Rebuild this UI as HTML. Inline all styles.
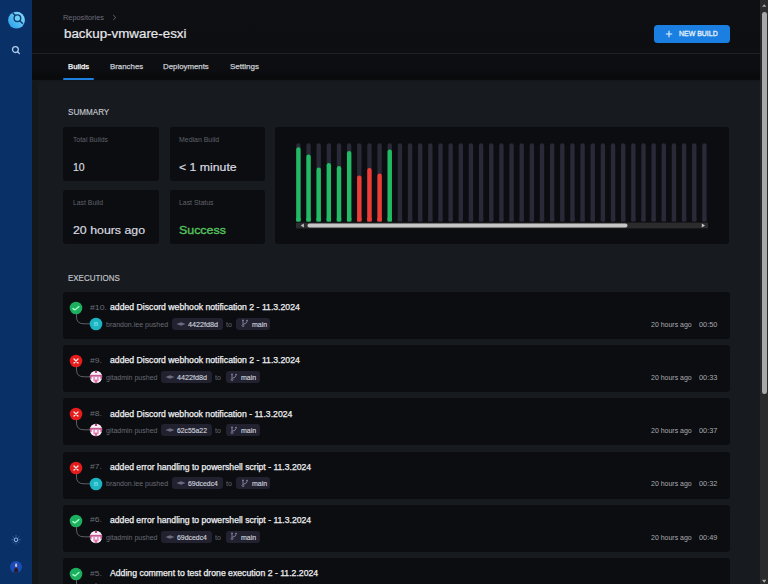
<!DOCTYPE html>
<html><head><meta charset="utf-8">
<style>
*{margin:0;padding:0;box-sizing:border-box}
html,body{width:768px;height:584px;overflow:hidden;background:#181c20;font-family:"Liberation Sans",sans-serif}
.a{position:absolute}
.t{position:absolute;white-space:nowrap;line-height:1;transform-origin:0 0}
.card{position:absolute;background:#0c0d10;border-radius:3px}
.chip{position:absolute;background:#21212f;border-radius:3px}
</style></head><body>

<div class="a" style="left:0;top:0;width:32px;height:584px;background:#0a3068"></div>
<div class="a" style="left:32px;top:0;width:729px;height:80px;background:linear-gradient(#0e0f12 0,#0d0e11 70px,#0a0b0d 76px,#0a0b0d 80px)"></div>
<div class="a" style="left:32px;top:53px;width:729px;height:1px;background:#1e2025"></div>
<div class="a" style="left:32px;top:80px;width:729px;height:504px;background:linear-gradient(#14171a 0,#171b1f 3px)"></div>
<div class="a" style="left:32px;top:80px;width:6px;height:504px;background:#15181b"></div>
<div class="a" style="left:760px;top:0;width:8px;height:584px;background:#2b2b2d"></div>
<div class="a" style="left:762px;top:11.5px;width:4.6px;height:382.5px;background:#a9a9a9;border-radius:2.3px"></div>
<svg class="a" style="left:760px;top:0" width="8" height="584"><path d="M4.2,4.2 L6.4,6.8 L2,6.8Z" fill="#a9a9a9"/><path d="M4.2,582.8 L6.4,579.8 L2,579.8Z" fill="#a9a9a9"/></svg>
<div class="a" style="left:63px;top:77.9px;width:31.2px;height:2.2px;background:#1d7fe0;border-radius:1px"></div>
<div class="a" style="left:654.3px;top:24.5px;width:75.8px;height:18px;background:#1a7fe0;border-radius:3.5px"></div>
<svg class="a" style="left:664px;top:28.6px" width="10" height="10" viewBox="0 0 10 10"><path d="M5,1.8 V8.2 M1.8,5 H8.2" stroke="#eaf3ff" stroke-width="1.1"/></svg>
<svg class="a" style="left:110.5px;top:14.2px" width="7" height="7" viewBox="0 0 7 7"><path d="M2.2,1 L4.8,3.5 L2.2,6" stroke="#6b6d7c" stroke-width="0.9" fill="none"/></svg>
<div class="card" style="left:63.2px;top:127px;width:95.8px;height:54px"></div>
<div class="card" style="left:170.2px;top:127px;width:95px;height:54px"></div>
<div class="card" style="left:63.2px;top:190px;width:95.8px;height:54px"></div>
<div class="card" style="left:170.2px;top:190px;width:95px;height:54px"></div>
<div class="card" style="left:275.4px;top:126.8px;width:454px;height:116.8px"></div>
<svg class="a" style="left:4px;top:8px" width="25" height="25" viewBox="0 0 25 25">
<defs><linearGradient id="lg" x1="1" y1="0" x2="0" y2="1"><stop offset="0" stop-color="#8fe0ff"/><stop offset="1" stop-color="#1f9be8"/></linearGradient></defs>
<circle cx="12.5" cy="12.2" r="8.4" fill="url(#lg)"/>
<circle cx="13.4" cy="10.2" r="3.3" fill="#6ccff5" stroke="#0d3d70" stroke-width="1.4"/>
<path d="M8.6,4.5 L11.3,7.8 M15.6,12.5 L18.8,15.8" stroke="#0d3d70" stroke-width="1.4"/>
</svg>
<svg class="a" style="left:10px;top:43.9px" width="12" height="12" viewBox="0 0 12 12"><circle cx="5.4" cy="5.6" r="2.9" fill="none" stroke="#b3cdef" stroke-width="1.3"/><path d="M7.5,7.7 L9.4,9.6" stroke="#b3cdef" stroke-width="1.3" stroke-linecap="round"/></svg>
<svg class="a" style="left:10px;top:534px" width="12" height="12" viewBox="0 0 12 12"><circle cx="6" cy="5.8" r="1.8" fill="none" stroke="#88aee0" stroke-width="1.1"/><path d="M6,1.2 V2.6 M6,9 V10.4 M1.4,5.8 H2.8 M9.2,5.8 H10.6 M2.7,2.5 L3.6,3.4 M8.4,8.2 L9.3,9.1 M2.7,9.1 L3.6,8.2 M8.4,3.4 L9.3,2.5" stroke="#4f78b4" stroke-width="0.9"/></svg>
<svg class="a" style="left:9.3px;top:560.3px" width="14" height="14" viewBox="0 0 14 14"><circle cx="7" cy="7" r="6" fill="#1a4cb8"/><ellipse cx="7.1" cy="5.2" rx="1.1" ry="2" fill="#cdb8c4"/><path d="M5,12.5 Q5,7.6 7.1,7.4 Q9.2,7.6 9.4,12.5 Z" fill="#2b1c22"/></svg>

<div class="card" style="left:63px;top:292.00px;width:667px;height:47px"></div>
<svg class="a" style="left:68.45px;top:299.90px" width="16" height="16" viewBox="-8 -8 16 16"><circle r="6.3" fill="#1caf5e"/><path d="M-3.1,0.6 L-1.1,1.9 L3,-1.4" stroke="#a8ffcf" stroke-width="1.3" fill="none" stroke-linecap="round" stroke-linejoin="round"/></svg>
<svg class="a" style="left:70px;top:314.00px" width="20" height="14" viewBox="0 0 20 14"><path d="M6.5,0 L6.5,3 Q6.5,9.8 14,9.8 L20,9.8" stroke="#5c5e66" stroke-width="1" fill="none"/></svg>
<svg class="a" style="left:88.90px;top:316.90px" width="14" height="14" viewBox="-7 -7 14 14"><circle r="6.3" fill="#19b5c3"/><text x="0" y="2.3" font-size="6.2" font-family="Liberation Sans" font-weight="bold" fill="#79dbe6" text-anchor="middle">B</text></svg>
<div class="chip" style="left:172.00px;top:317.70px;width:51px;height:12px"></div>
<svg class="a" style="left:176.00px;top:320.80px" width="10" height="6" viewBox="0 0 10 6"><path d="M0.5,3 L5,1.2 L9.5,3 L5,4.8 Z" fill="#6a6b80"/></svg>
<div class="chip" style="left:236.30px;top:317.70px;width:34px;height:12px"></div>
<svg class="a" style="left:240.80px;top:319.30px" width="8" height="8" viewBox="0 0 8 8"><path d="M2,1.6 V5.6 M6,2.4 Q6,4.6 2.3,5.2" stroke="#8586a0" stroke-width="0.9" fill="none"/><circle cx="2" cy="1.3" r="0.9" fill="#8586a0"/><circle cx="6" cy="1.6" r="0.9" fill="#8586a0"/><circle cx="2" cy="6.6" r="1" fill="none" stroke="#8586a0" stroke-width="0.8"/></svg>
<div class="card" style="left:63px;top:345.20px;width:667px;height:47px"></div>
<svg class="a" style="left:68.45px;top:353.10px" width="16" height="16" viewBox="-8 -8 16 16"><circle r="6.3" fill="#e61c1c"/><path d="M-2,-2 L2,2 M2,-2 L-2,2" stroke="#ffe8e8" stroke-width="1.3" stroke-linecap="round"/></svg>
<svg class="a" style="left:70px;top:367.20px" width="20" height="14" viewBox="0 0 20 14"><path d="M6.5,0 L6.5,3 Q6.5,9.8 14,9.8 L20,9.8" stroke="#5c5e66" stroke-width="1" fill="none"/></svg>
<svg class="a" style="left:88.90px;top:370.10px" width="14" height="14" viewBox="-7 -7 14 14"><defs><clipPath id="cp1"><circle r="6.2"/></clipPath></defs><circle r="6.2" fill="#fbf4f9"/><g clip-path="url(#cp1)" fill="#c23f86"><rect x="-1.1" y="-6" width="2.2" height="2"/><rect x="-6" y="-2.2" width="12" height="1.9" fill="#c85a96"/><rect x="-2.7" y="-0.5" width="1.6" height="4.5" fill="#e48dbd"/><rect x="1.1" y="-0.5" width="1.6" height="4.5" fill="#e48dbd"/><rect x="-1.3" y="2.6" width="2.6" height="3.5" fill="#e36aa8"/><rect x="-6" y="-2" width="1.6" height="4" fill="#c85a96"/><rect x="4.4" y="-2" width="1.6" height="4" fill="#c85a96"/></g></svg>
<div class="chip" style="left:161.40px;top:370.90px;width:51px;height:12px"></div>
<svg class="a" style="left:165.40px;top:374.00px" width="10" height="6" viewBox="0 0 10 6"><path d="M0.5,3 L5,1.2 L9.5,3 L5,4.8 Z" fill="#6a6b80"/></svg>
<div class="chip" style="left:225.70px;top:370.90px;width:34px;height:12px"></div>
<svg class="a" style="left:230.20px;top:372.50px" width="8" height="8" viewBox="0 0 8 8"><path d="M2,1.6 V5.6 M6,2.4 Q6,4.6 2.3,5.2" stroke="#8586a0" stroke-width="0.9" fill="none"/><circle cx="2" cy="1.3" r="0.9" fill="#8586a0"/><circle cx="6" cy="1.6" r="0.9" fill="#8586a0"/><circle cx="2" cy="6.6" r="1" fill="none" stroke="#8586a0" stroke-width="0.8"/></svg>
<div class="card" style="left:63px;top:398.40px;width:667px;height:47px"></div>
<svg class="a" style="left:68.45px;top:406.30px" width="16" height="16" viewBox="-8 -8 16 16"><circle r="6.3" fill="#e61c1c"/><path d="M-2,-2 L2,2 M2,-2 L-2,2" stroke="#ffe8e8" stroke-width="1.3" stroke-linecap="round"/></svg>
<svg class="a" style="left:70px;top:420.40px" width="20" height="14" viewBox="0 0 20 14"><path d="M6.5,0 L6.5,3 Q6.5,9.8 14,9.8 L20,9.8" stroke="#5c5e66" stroke-width="1" fill="none"/></svg>
<svg class="a" style="left:88.90px;top:423.30px" width="14" height="14" viewBox="-7 -7 14 14"><defs><clipPath id="cp2"><circle r="6.2"/></clipPath></defs><circle r="6.2" fill="#fbf4f9"/><g clip-path="url(#cp2)" fill="#c23f86"><rect x="-1.1" y="-6" width="2.2" height="2"/><rect x="-6" y="-2.2" width="12" height="1.9" fill="#c85a96"/><rect x="-2.7" y="-0.5" width="1.6" height="4.5" fill="#e48dbd"/><rect x="1.1" y="-0.5" width="1.6" height="4.5" fill="#e48dbd"/><rect x="-1.3" y="2.6" width="2.6" height="3.5" fill="#e36aa8"/><rect x="-6" y="-2" width="1.6" height="4" fill="#c85a96"/><rect x="4.4" y="-2" width="1.6" height="4" fill="#c85a96"/></g></svg>
<div class="chip" style="left:161.40px;top:424.10px;width:51px;height:12px"></div>
<svg class="a" style="left:165.40px;top:427.20px" width="10" height="6" viewBox="0 0 10 6"><path d="M0.5,3 L5,1.2 L9.5,3 L5,4.8 Z" fill="#6a6b80"/></svg>
<div class="chip" style="left:225.70px;top:424.10px;width:34px;height:12px"></div>
<svg class="a" style="left:230.20px;top:425.70px" width="8" height="8" viewBox="0 0 8 8"><path d="M2,1.6 V5.6 M6,2.4 Q6,4.6 2.3,5.2" stroke="#8586a0" stroke-width="0.9" fill="none"/><circle cx="2" cy="1.3" r="0.9" fill="#8586a0"/><circle cx="6" cy="1.6" r="0.9" fill="#8586a0"/><circle cx="2" cy="6.6" r="1" fill="none" stroke="#8586a0" stroke-width="0.8"/></svg>
<div class="card" style="left:63px;top:451.60px;width:667px;height:47px"></div>
<svg class="a" style="left:68.45px;top:459.50px" width="16" height="16" viewBox="-8 -8 16 16"><circle r="6.3" fill="#e61c1c"/><path d="M-2,-2 L2,2 M2,-2 L-2,2" stroke="#ffe8e8" stroke-width="1.3" stroke-linecap="round"/></svg>
<svg class="a" style="left:70px;top:473.60px" width="20" height="14" viewBox="0 0 20 14"><path d="M6.5,0 L6.5,3 Q6.5,9.8 14,9.8 L20,9.8" stroke="#5c5e66" stroke-width="1" fill="none"/></svg>
<svg class="a" style="left:88.90px;top:476.50px" width="14" height="14" viewBox="-7 -7 14 14"><circle r="6.3" fill="#19b5c3"/><text x="0" y="2.3" font-size="6.2" font-family="Liberation Sans" font-weight="bold" fill="#79dbe6" text-anchor="middle">B</text></svg>
<div class="chip" style="left:172.00px;top:477.30px;width:51px;height:12px"></div>
<svg class="a" style="left:176.00px;top:480.40px" width="10" height="6" viewBox="0 0 10 6"><path d="M0.5,3 L5,1.2 L9.5,3 L5,4.8 Z" fill="#6a6b80"/></svg>
<div class="chip" style="left:236.30px;top:477.30px;width:34px;height:12px"></div>
<svg class="a" style="left:240.80px;top:478.90px" width="8" height="8" viewBox="0 0 8 8"><path d="M2,1.6 V5.6 M6,2.4 Q6,4.6 2.3,5.2" stroke="#8586a0" stroke-width="0.9" fill="none"/><circle cx="2" cy="1.3" r="0.9" fill="#8586a0"/><circle cx="6" cy="1.6" r="0.9" fill="#8586a0"/><circle cx="2" cy="6.6" r="1" fill="none" stroke="#8586a0" stroke-width="0.8"/></svg>
<div class="card" style="left:63px;top:504.80px;width:667px;height:47px"></div>
<svg class="a" style="left:68.45px;top:512.70px" width="16" height="16" viewBox="-8 -8 16 16"><circle r="6.3" fill="#1caf5e"/><path d="M-3.1,0.6 L-1.1,1.9 L3,-1.4" stroke="#a8ffcf" stroke-width="1.3" fill="none" stroke-linecap="round" stroke-linejoin="round"/></svg>
<svg class="a" style="left:70px;top:526.80px" width="20" height="14" viewBox="0 0 20 14"><path d="M6.5,0 L6.5,3 Q6.5,9.8 14,9.8 L20,9.8" stroke="#5c5e66" stroke-width="1" fill="none"/></svg>
<svg class="a" style="left:88.90px;top:529.70px" width="14" height="14" viewBox="-7 -7 14 14"><defs><clipPath id="cp4"><circle r="6.2"/></clipPath></defs><circle r="6.2" fill="#fbf4f9"/><g clip-path="url(#cp4)" fill="#c23f86"><rect x="-1.1" y="-6" width="2.2" height="2"/><rect x="-6" y="-2.2" width="12" height="1.9" fill="#c85a96"/><rect x="-2.7" y="-0.5" width="1.6" height="4.5" fill="#e48dbd"/><rect x="1.1" y="-0.5" width="1.6" height="4.5" fill="#e48dbd"/><rect x="-1.3" y="2.6" width="2.6" height="3.5" fill="#e36aa8"/><rect x="-6" y="-2" width="1.6" height="4" fill="#c85a96"/><rect x="4.4" y="-2" width="1.6" height="4" fill="#c85a96"/></g></svg>
<div class="chip" style="left:161.40px;top:530.50px;width:51px;height:12px"></div>
<svg class="a" style="left:165.40px;top:533.60px" width="10" height="6" viewBox="0 0 10 6"><path d="M0.5,3 L5,1.2 L9.5,3 L5,4.8 Z" fill="#6a6b80"/></svg>
<div class="chip" style="left:225.70px;top:530.50px;width:34px;height:12px"></div>
<svg class="a" style="left:230.20px;top:532.10px" width="8" height="8" viewBox="0 0 8 8"><path d="M2,1.6 V5.6 M6,2.4 Q6,4.6 2.3,5.2" stroke="#8586a0" stroke-width="0.9" fill="none"/><circle cx="2" cy="1.3" r="0.9" fill="#8586a0"/><circle cx="6" cy="1.6" r="0.9" fill="#8586a0"/><circle cx="2" cy="6.6" r="1" fill="none" stroke="#8586a0" stroke-width="0.8"/></svg>
<div class="card" style="left:63px;top:558.00px;width:667px;height:47px"></div>
<svg class="a" style="left:68.45px;top:565.90px" width="16" height="16" viewBox="-8 -8 16 16"><circle r="6.3" fill="#1caf5e"/><path d="M-3.1,0.6 L-1.1,1.9 L3,-1.4" stroke="#a8ffcf" stroke-width="1.3" fill="none" stroke-linecap="round" stroke-linejoin="round"/></svg>
<svg class="a" style="left:70px;top:580.00px" width="20" height="14" viewBox="0 0 20 14"><path d="M6.5,0 L6.5,3 Q6.5,9.8 14,9.8 L20,9.8" stroke="#5c5e66" stroke-width="1" fill="none"/></svg>
<svg class="a" style="left:88.90px;top:582.90px" width="14" height="14" viewBox="-7 -7 14 14"><defs><clipPath id="cp5"><circle r="6.2"/></clipPath></defs><circle r="6.2" fill="#fbf4f9"/><g clip-path="url(#cp5)" fill="#c23f86"><rect x="-1.1" y="-6" width="2.2" height="2"/><rect x="-6" y="-2.2" width="12" height="1.9" fill="#c85a96"/><rect x="-2.7" y="-0.5" width="1.6" height="4.5" fill="#e48dbd"/><rect x="1.1" y="-0.5" width="1.6" height="4.5" fill="#e48dbd"/><rect x="-1.3" y="2.6" width="2.6" height="3.5" fill="#e36aa8"/><rect x="-6" y="-2" width="1.6" height="4" fill="#c85a96"/><rect x="4.4" y="-2" width="1.6" height="4" fill="#c85a96"/></g></svg>
<div class="chip" style="left:161.40px;top:583.70px;width:51px;height:12px"></div>
<svg class="a" style="left:165.40px;top:586.80px" width="10" height="6" viewBox="0 0 10 6"><path d="M0.5,3 L5,1.2 L9.5,3 L5,4.8 Z" fill="#6a6b80"/></svg>
<div class="chip" style="left:225.70px;top:583.70px;width:34px;height:12px"></div>
<svg class="a" style="left:230.20px;top:585.30px" width="8" height="8" viewBox="0 0 8 8"><path d="M2,1.6 V5.6 M6,2.4 Q6,4.6 2.3,5.2" stroke="#8586a0" stroke-width="0.9" fill="none"/><circle cx="2" cy="1.3" r="0.9" fill="#8586a0"/><circle cx="6" cy="1.6" r="0.9" fill="#8586a0"/><circle cx="2" cy="6.6" r="1" fill="none" stroke="#8586a0" stroke-width="0.8"/></svg>
<svg class="a" style="left:0;top:0" width="768" height="584"><rect x="296.20" y="143.2" width="4.4" height="78.3" rx="2.2" fill="#292938"/><rect x="296.20" y="218" width="4.4" height="3.5" fill="#292938"/><rect x="296.20" y="147.30" width="4.4" height="74.20" rx="2.2" fill="#20bb63"/><rect x="296.20" y="218" width="4.4" height="3.5" fill="#20bb63"/><rect x="306.35" y="143.2" width="4.4" height="78.3" rx="2.2" fill="#292938"/><rect x="306.35" y="218" width="4.4" height="3.5" fill="#292938"/><rect x="306.35" y="154.50" width="4.4" height="67.00" rx="2.2" fill="#20bb63"/><rect x="306.35" y="218" width="4.4" height="3.5" fill="#20bb63"/><rect x="316.50" y="143.2" width="4.4" height="78.3" rx="2.2" fill="#292938"/><rect x="316.50" y="218" width="4.4" height="3.5" fill="#292938"/><rect x="316.50" y="167.60" width="4.4" height="53.90" rx="2.2" fill="#20bb63"/><rect x="316.50" y="218" width="4.4" height="3.5" fill="#20bb63"/><rect x="326.65" y="143.2" width="4.4" height="78.3" rx="2.2" fill="#292938"/><rect x="326.65" y="218" width="4.4" height="3.5" fill="#292938"/><rect x="326.65" y="163.00" width="4.4" height="58.50" rx="2.2" fill="#20bb63"/><rect x="326.65" y="218" width="4.4" height="3.5" fill="#20bb63"/><rect x="336.80" y="143.2" width="4.4" height="78.3" rx="2.2" fill="#292938"/><rect x="336.80" y="218" width="4.4" height="3.5" fill="#292938"/><rect x="336.80" y="166.00" width="4.4" height="55.50" rx="2.2" fill="#20bb63"/><rect x="336.80" y="218" width="4.4" height="3.5" fill="#20bb63"/><rect x="346.95" y="143.2" width="4.4" height="78.3" rx="2.2" fill="#292938"/><rect x="346.95" y="218" width="4.4" height="3.5" fill="#292938"/><rect x="346.95" y="150.90" width="4.4" height="70.60" rx="2.2" fill="#20bb63"/><rect x="346.95" y="218" width="4.4" height="3.5" fill="#20bb63"/><rect x="357.10" y="143.2" width="4.4" height="78.3" rx="2.2" fill="#292938"/><rect x="357.10" y="218" width="4.4" height="3.5" fill="#292938"/><rect x="357.10" y="175.40" width="4.4" height="46.10" rx="2.2" fill="#ef3d36"/><rect x="357.10" y="218" width="4.4" height="3.5" fill="#ef3d36"/><rect x="367.25" y="143.2" width="4.4" height="78.3" rx="2.2" fill="#292938"/><rect x="367.25" y="218" width="4.4" height="3.5" fill="#292938"/><rect x="367.25" y="167.90" width="4.4" height="53.60" rx="2.2" fill="#ef3d36"/><rect x="367.25" y="218" width="4.4" height="3.5" fill="#ef3d36"/><rect x="377.40" y="143.2" width="4.4" height="78.3" rx="2.2" fill="#292938"/><rect x="377.40" y="218" width="4.4" height="3.5" fill="#292938"/><rect x="377.40" y="173.50" width="4.4" height="48.00" rx="2.2" fill="#ef3d36"/><rect x="377.40" y="218" width="4.4" height="3.5" fill="#ef3d36"/><rect x="387.55" y="143.2" width="4.4" height="78.3" rx="2.2" fill="#292938"/><rect x="387.55" y="218" width="4.4" height="3.5" fill="#292938"/><rect x="387.55" y="149.40" width="4.4" height="72.10" rx="2.2" fill="#20bb63"/><rect x="387.55" y="218" width="4.4" height="3.5" fill="#20bb63"/><rect x="397.70" y="143.2" width="4.4" height="78.3" rx="2.2" fill="#292938"/><rect x="397.70" y="218" width="4.4" height="3.5" fill="#292938"/><rect x="407.85" y="143.2" width="4.4" height="78.3" rx="2.2" fill="#292938"/><rect x="407.85" y="218" width="4.4" height="3.5" fill="#292938"/><rect x="418.00" y="143.2" width="4.4" height="78.3" rx="2.2" fill="#292938"/><rect x="418.00" y="218" width="4.4" height="3.5" fill="#292938"/><rect x="428.15" y="143.2" width="4.4" height="78.3" rx="2.2" fill="#292938"/><rect x="428.15" y="218" width="4.4" height="3.5" fill="#292938"/><rect x="438.30" y="143.2" width="4.4" height="78.3" rx="2.2" fill="#292938"/><rect x="438.30" y="218" width="4.4" height="3.5" fill="#292938"/><rect x="448.45" y="143.2" width="4.4" height="78.3" rx="2.2" fill="#292938"/><rect x="448.45" y="218" width="4.4" height="3.5" fill="#292938"/><rect x="458.60" y="143.2" width="4.4" height="78.3" rx="2.2" fill="#292938"/><rect x="458.60" y="218" width="4.4" height="3.5" fill="#292938"/><rect x="468.75" y="143.2" width="4.4" height="78.3" rx="2.2" fill="#292938"/><rect x="468.75" y="218" width="4.4" height="3.5" fill="#292938"/><rect x="478.90" y="143.2" width="4.4" height="78.3" rx="2.2" fill="#292938"/><rect x="478.90" y="218" width="4.4" height="3.5" fill="#292938"/><rect x="489.05" y="143.2" width="4.4" height="78.3" rx="2.2" fill="#292938"/><rect x="489.05" y="218" width="4.4" height="3.5" fill="#292938"/><rect x="499.20" y="143.2" width="4.4" height="78.3" rx="2.2" fill="#292938"/><rect x="499.20" y="218" width="4.4" height="3.5" fill="#292938"/><rect x="509.35" y="143.2" width="4.4" height="78.3" rx="2.2" fill="#292938"/><rect x="509.35" y="218" width="4.4" height="3.5" fill="#292938"/><rect x="519.50" y="143.2" width="4.4" height="78.3" rx="2.2" fill="#292938"/><rect x="519.50" y="218" width="4.4" height="3.5" fill="#292938"/><rect x="529.65" y="143.2" width="4.4" height="78.3" rx="2.2" fill="#292938"/><rect x="529.65" y="218" width="4.4" height="3.5" fill="#292938"/><rect x="539.80" y="143.2" width="4.4" height="78.3" rx="2.2" fill="#292938"/><rect x="539.80" y="218" width="4.4" height="3.5" fill="#292938"/><rect x="549.95" y="143.2" width="4.4" height="78.3" rx="2.2" fill="#292938"/><rect x="549.95" y="218" width="4.4" height="3.5" fill="#292938"/><rect x="560.10" y="143.2" width="4.4" height="78.3" rx="2.2" fill="#292938"/><rect x="560.10" y="218" width="4.4" height="3.5" fill="#292938"/><rect x="570.25" y="143.2" width="4.4" height="78.3" rx="2.2" fill="#292938"/><rect x="570.25" y="218" width="4.4" height="3.5" fill="#292938"/><rect x="580.40" y="143.2" width="4.4" height="78.3" rx="2.2" fill="#292938"/><rect x="580.40" y="218" width="4.4" height="3.5" fill="#292938"/><rect x="590.55" y="143.2" width="4.4" height="78.3" rx="2.2" fill="#292938"/><rect x="590.55" y="218" width="4.4" height="3.5" fill="#292938"/><rect x="600.70" y="143.2" width="4.4" height="78.3" rx="2.2" fill="#292938"/><rect x="600.70" y="218" width="4.4" height="3.5" fill="#292938"/><rect x="610.85" y="143.2" width="4.4" height="78.3" rx="2.2" fill="#292938"/><rect x="610.85" y="218" width="4.4" height="3.5" fill="#292938"/><rect x="621.00" y="143.2" width="4.4" height="78.3" rx="2.2" fill="#292938"/><rect x="621.00" y="218" width="4.4" height="3.5" fill="#292938"/><rect x="631.15" y="143.2" width="4.4" height="78.3" rx="2.2" fill="#292938"/><rect x="631.15" y="218" width="4.4" height="3.5" fill="#292938"/><rect x="641.30" y="143.2" width="4.4" height="78.3" rx="2.2" fill="#292938"/><rect x="641.30" y="218" width="4.4" height="3.5" fill="#292938"/><rect x="651.45" y="143.2" width="4.4" height="78.3" rx="2.2" fill="#292938"/><rect x="651.45" y="218" width="4.4" height="3.5" fill="#292938"/><rect x="661.60" y="143.2" width="4.4" height="78.3" rx="2.2" fill="#292938"/><rect x="661.60" y="218" width="4.4" height="3.5" fill="#292938"/><rect x="671.75" y="143.2" width="4.4" height="78.3" rx="2.2" fill="#292938"/><rect x="671.75" y="218" width="4.4" height="3.5" fill="#292938"/><rect x="681.90" y="143.2" width="4.4" height="78.3" rx="2.2" fill="#292938"/><rect x="681.90" y="218" width="4.4" height="3.5" fill="#292938"/><rect x="692.05" y="143.2" width="4.4" height="78.3" rx="2.2" fill="#292938"/><rect x="692.05" y="218" width="4.4" height="3.5" fill="#292938"/><rect x="702.20" y="143.2" width="4.4" height="78.3" rx="2.2" fill="#292938"/><rect x="702.20" y="218" width="4.4" height="3.5" fill="#292938"/><rect x="296" y="222.6" width="412" height="5.8" fill="#2c2c2e"/><rect x="307.5" y="223.6" width="320" height="3.8" rx="1.9" fill="#c6c6c6"/><path d="M300.8,225.4 L303.8,223.4 L303.8,227.4 Z" fill="#c8c8c8"/><path d="M705,225.5 L701.8,223.5 L701.8,227.5 Z" fill="#c8c8c8"/></svg>
<div class="t" style="left:63.10px;top:15.38px;font-size:6.4px;font-weight:normal;color:#6b6d7c;transform:scaleX(1.1522);">Repositories</div>
<div class="t" style="left:63.50px;top:28.09px;font-size:12.3px;font-weight:normal;color:#e6e7ea;transform:scaleX(1.0864);-webkit-text-stroke:0.2px #e6e7ea;">backup-vmware-esxi</div>
<div class="t" style="left:67.90px;top:63.07px;font-size:7.6px;font-weight:normal;color:#ffffff;transform:scaleX(1.0198);-webkit-text-stroke:0.25px #ffffff;">Builds</div>
<div class="t" style="left:109.50px;top:63.07px;font-size:7.6px;font-weight:normal;color:#c9cbd1;transform:scaleX(1.0346);-webkit-text-stroke:0.25px #c9cbd1;">Branches</div>
<div class="t" style="left:163.00px;top:63.07px;font-size:7.6px;font-weight:normal;color:#c9cbd1;transform:scaleX(1.0332);-webkit-text-stroke:0.25px #c9cbd1;">Deployments</div>
<div class="t" style="left:229.80px;top:63.07px;font-size:7.6px;font-weight:normal;color:#c9cbd1;transform:scaleX(1.0564);-webkit-text-stroke:0.25px #c9cbd1;">Settings</div>
<div class="t" style="left:679.00px;top:30.02px;font-size:7.3px;font-weight:normal;color:#eaf3ff;transform:scaleX(0.9535);-webkit-text-stroke:0.3px #eaf3ff;">NEW BUILD</div>
<div class="t" style="left:68.00px;top:108.02px;font-size:8.6px;font-weight:normal;color:#c3c6cc;transform:scaleX(0.9424);-webkit-text-stroke:0.15px #c3c6cc;">SUMMARY</div>
<div class="t" style="left:73.40px;top:136.17px;font-size:7.0px;font-weight:normal;color:#5f626c;transform:scaleX(0.9753);">Total Builds</div>
<div class="t" style="left:73.40px;top:160.90px;font-size:11.7px;font-weight:normal;color:#d9dbe0;transform:scaleX(0.8963);-webkit-text-stroke:0.2px #d9dbe0;">10</div>
<div class="t" style="left:178.70px;top:136.17px;font-size:7.0px;font-weight:normal;color:#5f626c;transform:scaleX(0.9932);">Median Build</div>
<div class="t" style="left:179.30px;top:160.90px;font-size:11.7px;font-weight:normal;color:#d9dbe0;transform:scaleX(1.0496);-webkit-text-stroke:0.2px #d9dbe0;">&lt; 1 minute</div>
<div class="t" style="left:72.80px;top:199.17px;font-size:7.0px;font-weight:normal;color:#5f626c;transform:scaleX(0.9790);">Last Build</div>
<div class="t" style="left:73.40px;top:224.20px;font-size:11.7px;font-weight:normal;color:#d9dbe0;transform:scaleX(1.0563);-webkit-text-stroke:0.2px #d9dbe0;">20 hours ago</div>
<div class="t" style="left:179.00px;top:199.17px;font-size:7.0px;font-weight:normal;color:#5f626c;transform:scaleX(0.9853);">Last Status</div>
<div class="t" style="left:179.00px;top:224.20px;font-size:11.7px;font-weight:normal;color:#54c45e;transform:scaleX(1.0603);-webkit-text-stroke:0.35px #54c45e;">Success</div>
<div class="t" style="left:68.00px;top:274.02px;font-size:8.6px;font-weight:normal;color:#c3c6cc;transform:scaleX(0.9263);-webkit-text-stroke:0.15px #c3c6cc;">EXECUTIONS</div>
<div class="t" style="left:89.80px;top:303.53px;font-size:8.0px;font-weight:normal;color:#6a6d78;transform:scaleX(1.0946);">#10.</div>
<div class="t" style="left:110.00px;top:304.26px;font-size:8.2px;font-weight:normal;color:#eeeff2;transform:scaleX(1.0594);-webkit-text-stroke:0.25px #eeeff2;">added Discord webhook notification 2 - 11.3.2024</div>
<div class="t" style="left:105.90px;top:321.89px;font-size:7.1px;font-weight:normal;color:#686b76;transform:scaleX(0.9893);">brandon.lee pushed</div>
<div class="t" style="left:188.00px;top:321.89px;font-size:7.1px;font-weight:normal;color:#cfd1dc;transform:scaleX(1.0121);-webkit-text-stroke:0.15px #cfd1dc;">4422fd8d</div>
<div class="t" style="left:225.80px;top:321.89px;font-size:7.1px;font-weight:normal;color:#686b76;transform:scaleX(0.9881);">to</div>
<div class="t" style="left:251.50px;top:321.89px;font-size:7.1px;font-weight:normal;color:#cfd1dc;transform:scaleX(0.9851);-webkit-text-stroke:0.15px #cfd1dc;">main</div>
<div class="t" style="left:650.80px;top:321.89px;font-size:7.1px;font-weight:normal;color:#a9abb3;transform:scaleX(0.9839);">20 hours ago</div>
<div class="t" style="left:699.20px;top:321.89px;font-size:7.1px;font-weight:normal;color:#a9abb3;transform:scaleX(1.0333);">00:50</div>
<div class="t" style="left:89.80px;top:356.73px;font-size:8.0px;font-weight:normal;color:#6a6d78;transform:scaleX(1.0552);">#9.</div>
<div class="t" style="left:109.60px;top:357.46px;font-size:8.2px;font-weight:normal;color:#eeeff2;transform:scaleX(1.0594);-webkit-text-stroke:0.25px #eeeff2;">added Discord webhook notification 2 - 11.3.2024</div>
<div class="t" style="left:105.90px;top:375.09px;font-size:7.1px;font-weight:normal;color:#686b76;transform:scaleX(0.9883);">gitadmin pushed</div>
<div class="t" style="left:177.40px;top:375.09px;font-size:7.1px;font-weight:normal;color:#cfd1dc;transform:scaleX(1.0121);-webkit-text-stroke:0.15px #cfd1dc;">4422fd8d</div>
<div class="t" style="left:215.20px;top:375.09px;font-size:7.1px;font-weight:normal;color:#686b76;transform:scaleX(0.9881);">to</div>
<div class="t" style="left:240.90px;top:375.09px;font-size:7.1px;font-weight:normal;color:#cfd1dc;transform:scaleX(0.9851);-webkit-text-stroke:0.15px #cfd1dc;">main</div>
<div class="t" style="left:650.80px;top:375.09px;font-size:7.1px;font-weight:normal;color:#a9abb3;transform:scaleX(0.9839);">20 hours ago</div>
<div class="t" style="left:699.20px;top:375.09px;font-size:7.1px;font-weight:normal;color:#a9abb3;transform:scaleX(1.0333);">00:33</div>
<div class="t" style="left:89.80px;top:409.93px;font-size:8.0px;font-weight:normal;color:#6a6d78;transform:scaleX(1.0552);">#8.</div>
<div class="t" style="left:109.60px;top:410.66px;font-size:8.2px;font-weight:normal;color:#eeeff2;transform:scaleX(1.0579);-webkit-text-stroke:0.25px #eeeff2;">added Discord webhook notification - 11.3.2024</div>
<div class="t" style="left:105.90px;top:428.29px;font-size:7.1px;font-weight:normal;color:#686b76;transform:scaleX(0.9883);">gitadmin pushed</div>
<div class="t" style="left:177.40px;top:428.29px;font-size:7.1px;font-weight:normal;color:#cfd1dc;transform:scaleX(0.9610);-webkit-text-stroke:0.15px #cfd1dc;">62c55a22</div>
<div class="t" style="left:215.20px;top:428.29px;font-size:7.1px;font-weight:normal;color:#686b76;transform:scaleX(0.9881);">to</div>
<div class="t" style="left:240.90px;top:428.29px;font-size:7.1px;font-weight:normal;color:#cfd1dc;transform:scaleX(0.9851);-webkit-text-stroke:0.15px #cfd1dc;">main</div>
<div class="t" style="left:650.80px;top:428.29px;font-size:7.1px;font-weight:normal;color:#a9abb3;transform:scaleX(0.9839);">20 hours ago</div>
<div class="t" style="left:699.20px;top:428.29px;font-size:7.1px;font-weight:normal;color:#a9abb3;transform:scaleX(1.0333);">00:37</div>
<div class="t" style="left:89.80px;top:463.13px;font-size:8.0px;font-weight:normal;color:#6a6d78;transform:scaleX(1.0552);">#7.</div>
<div class="t" style="left:109.60px;top:463.86px;font-size:8.2px;font-weight:normal;color:#eeeff2;transform:scaleX(1.0530);-webkit-text-stroke:0.25px #eeeff2;">added error handling to powershell script - 11.3.2024</div>
<div class="t" style="left:105.90px;top:481.49px;font-size:7.1px;font-weight:normal;color:#686b76;transform:scaleX(0.9893);">brandon.lee pushed</div>
<div class="t" style="left:188.00px;top:481.49px;font-size:7.1px;font-weight:normal;color:#cfd1dc;transform:scaleX(0.9734);-webkit-text-stroke:0.15px #cfd1dc;">69dcedc4</div>
<div class="t" style="left:225.80px;top:481.49px;font-size:7.1px;font-weight:normal;color:#686b76;transform:scaleX(0.9881);">to</div>
<div class="t" style="left:251.50px;top:481.49px;font-size:7.1px;font-weight:normal;color:#cfd1dc;transform:scaleX(0.9851);-webkit-text-stroke:0.15px #cfd1dc;">main</div>
<div class="t" style="left:650.80px;top:481.49px;font-size:7.1px;font-weight:normal;color:#a9abb3;transform:scaleX(0.9839);">20 hours ago</div>
<div class="t" style="left:699.20px;top:481.49px;font-size:7.1px;font-weight:normal;color:#a9abb3;transform:scaleX(1.0333);">00:32</div>
<div class="t" style="left:89.80px;top:516.33px;font-size:8.0px;font-weight:normal;color:#6a6d78;transform:scaleX(1.0552);">#6.</div>
<div class="t" style="left:109.60px;top:517.06px;font-size:8.2px;font-weight:normal;color:#eeeff2;transform:scaleX(1.0530);-webkit-text-stroke:0.25px #eeeff2;">added error handling to powershell script - 11.3.2024</div>
<div class="t" style="left:105.90px;top:534.69px;font-size:7.1px;font-weight:normal;color:#686b76;transform:scaleX(0.9883);">gitadmin pushed</div>
<div class="t" style="left:177.40px;top:534.69px;font-size:7.1px;font-weight:normal;color:#cfd1dc;transform:scaleX(0.9734);-webkit-text-stroke:0.15px #cfd1dc;">69dcedc4</div>
<div class="t" style="left:215.20px;top:534.69px;font-size:7.1px;font-weight:normal;color:#686b76;transform:scaleX(0.9881);">to</div>
<div class="t" style="left:240.90px;top:534.69px;font-size:7.1px;font-weight:normal;color:#cfd1dc;transform:scaleX(0.9851);-webkit-text-stroke:0.15px #cfd1dc;">main</div>
<div class="t" style="left:650.80px;top:534.69px;font-size:7.1px;font-weight:normal;color:#a9abb3;transform:scaleX(0.9839);">20 hours ago</div>
<div class="t" style="left:699.20px;top:534.69px;font-size:7.1px;font-weight:normal;color:#a9abb3;transform:scaleX(1.0333);">00:49</div>
<div class="t" style="left:89.80px;top:569.53px;font-size:8.0px;font-weight:normal;color:#6a6d78;transform:scaleX(1.0552);">#5.</div>
<div class="t" style="left:109.60px;top:570.26px;font-size:8.2px;font-weight:normal;color:#eeeff2;transform:scaleX(1.0593);-webkit-text-stroke:0.25px #eeeff2;">Adding comment to test drone execution 2 - 11.2.2024</div>
<div class="t" style="left:105.90px;top:587.89px;font-size:7.1px;font-weight:normal;color:#686b76;transform:scaleX(0.9883);">gitadmin pushed</div>
<div class="t" style="left:177.40px;top:587.89px;font-size:7.1px;font-weight:normal;color:#cfd1dc;transform:scaleX(0.9489);-webkit-text-stroke:0.15px #cfd1dc;">aaaaaaaa</div>
<div class="t" style="left:215.20px;top:587.89px;font-size:7.1px;font-weight:normal;color:#686b76;transform:scaleX(0.9881);">to</div>
<div class="t" style="left:240.90px;top:587.89px;font-size:7.1px;font-weight:normal;color:#cfd1dc;transform:scaleX(0.9851);-webkit-text-stroke:0.15px #cfd1dc;">main</div>
<div class="t" style="left:650.80px;top:587.89px;font-size:7.1px;font-weight:normal;color:#a9abb3;transform:scaleX(0.9839);">20 hours ago</div>
<div class="t" style="left:699.20px;top:587.89px;font-size:7.1px;font-weight:normal;color:#a9abb3;transform:scaleX(1.0333);">00:40</div>
</body></html>
